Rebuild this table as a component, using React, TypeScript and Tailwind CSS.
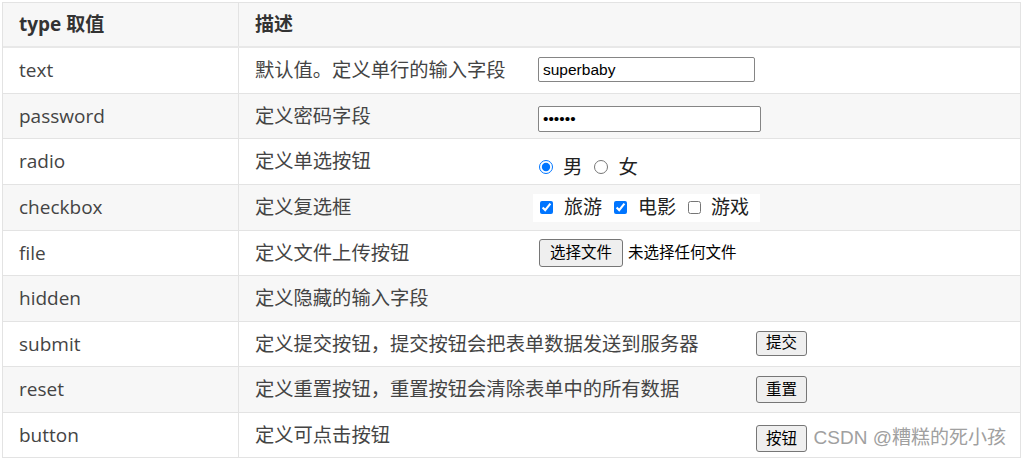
import React from "react";

const sans = "font-['Open_Sans','Noto_Sans_CJK_SC',sans-serif]";
const ctl = "font-['Arial','Liberation_Sans','Noto_Sans_CJK_SC',sans-serif]";

function Btn({ children, cls }: { children: React.ReactNode; cls: string }) {
  return (
    <span
      className={`inline-flex items-center justify-center bg-[#efefef] border border-[#767676] rounded-[3px] text-[15.5px] text-black ${ctl} ${cls}`}
    >
      {children}
    </span>
  );
}

type Row = {
  k: string;
  d: string;
  h: string;
  bg: string;
  dw: string;
  w?: React.ReactNode;
};

const rows: Row[] = [
  {
    k: "text",
    d: "默认值。定义单行的输入字段",
    h: "h-[46px]",
    bg: "bg-white",
    dw: "w-[283px]",
    w: (
      <input
        readOnly
        value="superbaby"
        className={`w-[217px] h-[25px] border border-[#858585] rounded-[2px] px-[4px] text-[15.5px] text-black outline-none ${ctl} -mt-[2px]`}
      />
    ),
  },
  {
    k: "password",
    d: "定义密码字段",
    h: "h-[45px]",
    bg: "bg-[#f7f7f7]",
    dw: "w-[283px]",
    w: (
      <input
        readOnly
        type="password"
        value="123456"
        className={`w-[223px] h-[26px] bg-white border border-[#858585] rounded-[2px] px-[4px] text-[15.5px] text-black outline-none ${ctl} mt-[6px]`}
      />
    ),
  },
  {
    k: "radio",
    d: "定义单选按钮",
    h: "h-[46px]",
    bg: "bg-white",
    dw: "w-[284px]",
    w: (
      <span className={`flex items-center mt-[11px] text-[19.5px] text-[#222] ${sans}`}>
        <input type="radio" checked readOnly className="m-0 w-[14px] h-[14px]" />
        <span className="ml-[10px]">男</span>
        <input type="radio" readOnly checked={false} className="m-0 ml-[11px] w-[14px] h-[14px]" />
        <span className="ml-[11px]">女</span>
      </span>
    ),
  },
  {
    k: "checkbox",
    d: "定义复选框",
    h: "h-[46px]",
    bg: "bg-[#f7f7f7]",
    dw: "w-[278px]",
    w: (
      <span className={`flex items-center bg-white h-[28px] pl-[7px] pr-[11px] text-[19px] text-[#222] ${sans}`}>
        <input type="checkbox" checked readOnly className="m-0 w-[13px] h-[13px]" />
        <span className="ml-[11px]">旅游</span>
        <input type="checkbox" checked readOnly className="m-0 ml-[12px] w-[13px] h-[13px]" />
        <span className="ml-[11px]">电影</span>
        <input type="checkbox" checked={false} readOnly className="m-0 ml-[12px] w-[13px] h-[13px]" />
        <span className="ml-[10px]">游戏</span>
      </span>
    ),
  },
  {
    k: "file",
    d: "定义文件上传按钮",
    h: "h-[45px]",
    bg: "bg-white",
    dw: "w-[284px]",
    w: (
      <span className="flex items-center">
        <Btn cls="w-[84px] h-[28px]">选择文件</Btn>
        <span className={`ml-[5px] text-[15.5px] text-black ${ctl}`}>未选择任何文件</span>
      </span>
    ),
  },
  { k: "hidden", d: "定义隐藏的输入字段", h: "h-[46px]", bg: "bg-[#f7f7f7]", dw: "w-[283px]" },
  {
    k: "submit",
    d: "定义提交按钮，提交按钮会把表单数据发送到服务器",
    h: "h-[45px]",
    bg: "bg-white",
    dw: "w-[501px]",
    w: <Btn cls="w-[51px] h-[25px] -mt-[2px]">提交</Btn>,
  },
  {
    k: "reset",
    d: "定义重置按钮，重置按钮会清除表单中的所有数据",
    h: "h-[46px]",
    bg: "bg-[#f7f7f7]",
    dw: "w-[501px]",
    w: <Btn cls="w-[51px] h-[27px]">重置</Btn>,
  },
  {
    k: "button",
    d: "定义可点击按钮",
    h: "h-[45px]",
    bg: "bg-white",
    dw: "w-[501px]",
    w: <Btn cls="w-[51px] h-[27px] mt-[7px]">按钮</Btn>,
  },
];

export default function App() {
  return (
    <div className={`relative w-[1021px] h-[460px] bg-white pt-[2px] pl-[2px] overflow-hidden ${sans}`}>
      <div className="w-[1019px] border-t border-l border-r border-[#e3e3e3]">
        <div className="grid grid-cols-[236px_1fr] h-[45px] bg-[#f7f7f7] border-b-2 border-[#e8e8e8]">
          <div className="flex items-center pl-[16px] border-r border-[#e3e3e3] text-[19px] font-bold text-[#333]">
            type 取值
          </div>
          <div className="flex items-center pl-[16px] text-[19px] font-bold text-[#333]">描述</div>
        </div>
        {rows.map((r) => (
          <div
            key={r.k}
            className={`grid grid-cols-[236px_1fr] ${r.h} ${r.bg} border-b border-[#e3e3e3]`}
          >
            <div className="flex items-center pl-[16px] border-r border-[#e3e3e3] text-[19px] text-[#444]">
              {r.k}
            </div>
            <div className="flex items-center pl-[16px] text-[19.3px] text-[#444]">
              <span className={`${r.dw} shrink-0 whitespace-nowrap`}>{r.d}</span>
              {r.w}
            </div>
          </div>
        ))}
      </div>
      <div className={`absolute right-[15px] bottom-[8px] text-[19px] text-[#a0a0a0] ${ctl}`}>
        CSDN @糟糕的死小孩
      </div>
    </div>
  );
}
